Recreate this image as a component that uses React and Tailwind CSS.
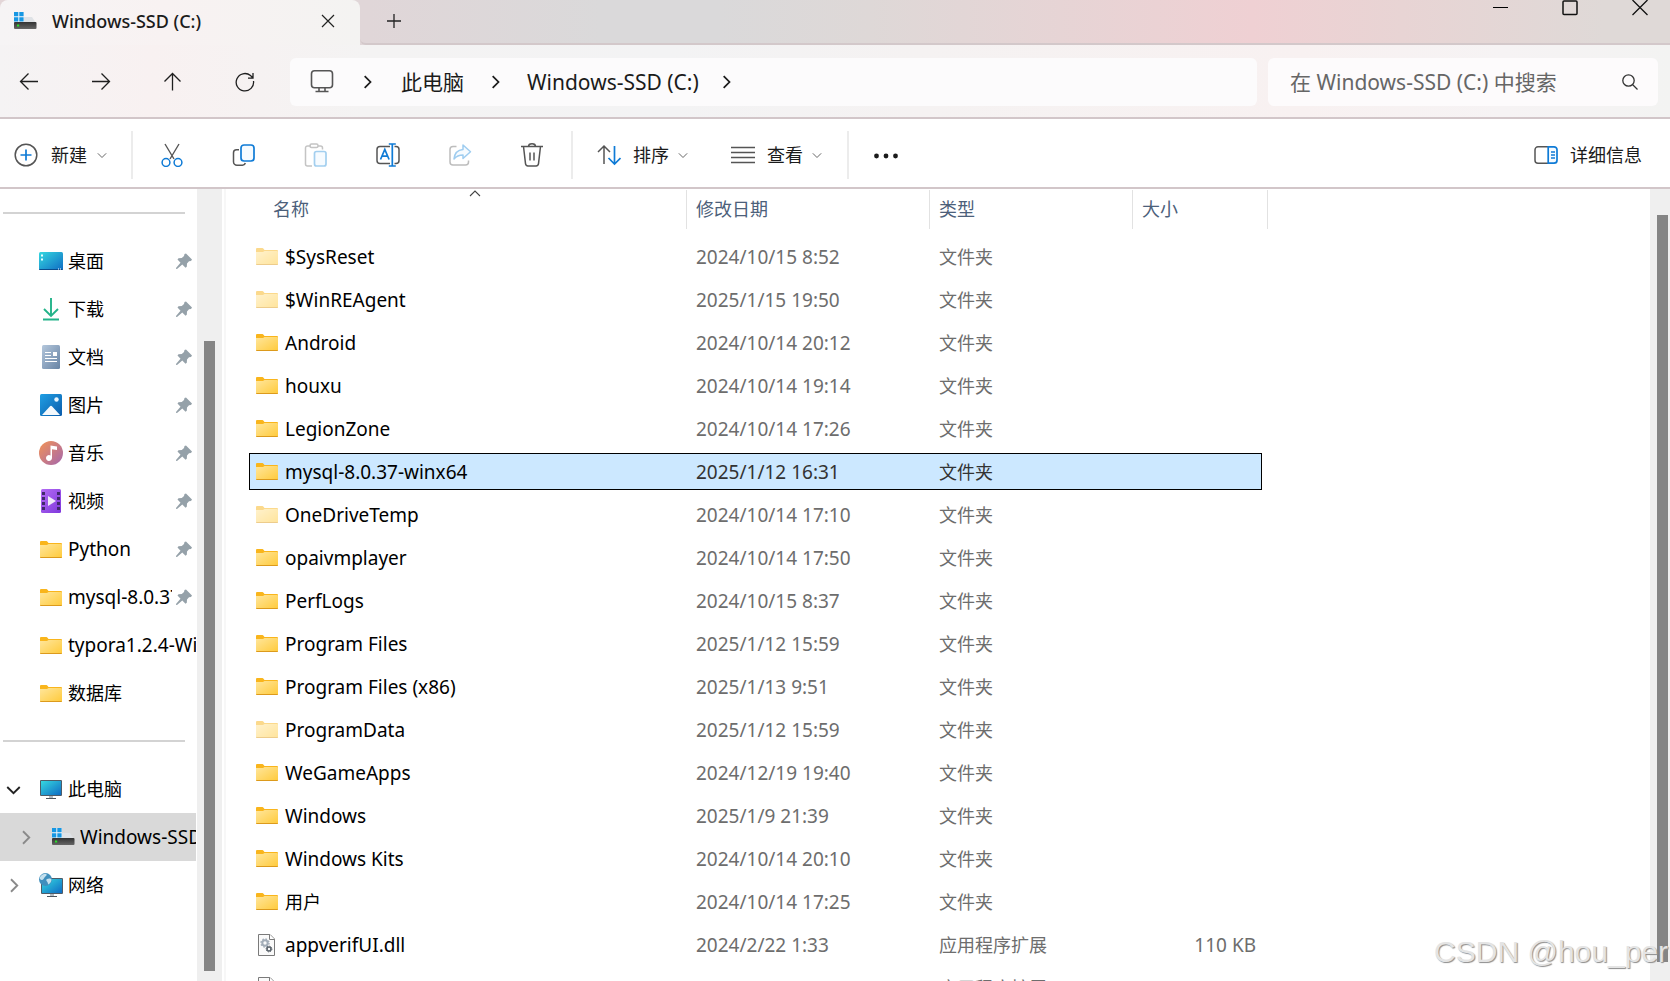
import React from "react";

const SANS = "font-['Noto_Sans','Noto_Sans_CJK_SC',sans-serif]";
const hasHan = (s) => /[\u4e00-\u9fff]/.test(s);
const sizeOf = (s) => (hasHan(s) ? "text-[18px]" : "text-[19px]");

/* ---------- icons ---------- */

function FolderIcon({ faded }) {
  return (
    <svg width="22" height="17" viewBox="0 0 22 17" className={faded ? "shrink-0 opacity-50" : "shrink-0"} aria-hidden="true">
      <defs>
        <linearGradient id="folderFill" x1="0" y1="0" x2="1" y2="1">
          <stop offset="0" stopColor="#ffe69c" />
          <stop offset="1" stopColor="#ffca3a" />
        </linearGradient>
      </defs>
      <path d="M0 1a1 1 0 0 1 1-1h5.500a1 1 0 0 1 .8.400L8.500 2H21a1 1 0 0 1 1 1v3H0z" fill="#f9b51c" />
      <path d="M0 4h7l1.500-1H21a1 1 0 0 1 1 1v12a1 1 0 0 1-1 1H1a1 1 0 0 1-1-1z" fill="url(#folderFill)" />
      <path d="M0 15.500v.5a1 1 0 0 0 1 1h20a1 1 0 0 0 1-1v-.5a.5.5 0 0 1-.5.500h-21a.5.5 0 0 1-.5-.5z" fill="#dc9a1c" />
    </svg>
  );
}

function DllIcon() {
  return (
    <svg width="22" height="22" viewBox="0 0 22 22" className="shrink-0" aria-hidden="true">
      <path d="M2.500.500h11.500l4.500 4.500v16.500h-16z" fill="#fafafa" stroke="#7a7a7a" />
      <path d="M13.500.500v5h5" fill="#fff" stroke="#7a7a7a" />
      <circle cx="9" cy="9" r="2.700" fill="none" stroke="#a3adb8" strokeWidth="2" />
      <circle cx="9" cy="9" r="4" fill="none" stroke="#a3adb8" strokeWidth="1.400" strokeDasharray="1.600 1.540" />
      <circle cx="13" cy="15" r="2" fill="none" stroke="#5c646c" strokeWidth="1.600" />
      <circle cx="13" cy="15" r="2.900" fill="none" stroke="#5c646c" strokeWidth="1" strokeDasharray="1.200 1.080" />
    </svg>
  );
}

function DriveIcon() {
  return (
    <svg width="23" height="18" viewBox="0 0 23 18" className="shrink-0" aria-hidden="true">
      <defs>
        <linearGradient id="driveBody" x1="0" y1="0" x2="0" y2="1">
          <stop offset="0" stopColor="#333" />
          <stop offset="1" stopColor="#666" />
        </linearGradient>
      </defs>
      <path d="M3 5h15l4 6H0z" fill="#dfe2e6" />
      <rect x="0" y="0" width="10" height="10" fill="#f4f6f8" />
      <path d="M0 0h4.300v4.300H0zM5.300 0h4.300v4.300H5.300zM0 5.300h4.300v4.300H0zM5.300 5.300h4.300v4.300H5.300z" fill="#1797e3" />
      <rect x="0" y="10" width="22.500" height="7" rx="1" fill="url(#driveBody)" />
      <rect x="3" y="12.500" width="2.200" height="2" fill="#2be02b" />
    </svg>
  );
}

function DesktopIcon() {
  return (
    <svg width="24" height="18" viewBox="0 0 24 18" aria-hidden="true">
      <defs>
        <linearGradient id="screenFill" x1="0" y1="0" x2="1" y2="1">
          <stop offset="0" stopColor="#35d8e0" />
          <stop offset="1" stopColor="#0f6cc4" />
        </linearGradient>
      </defs>
      <rect width="24" height="18" rx="1.500" fill="url(#screenFill)" />
      <path d="M0 17h24v0a1 1 0 0 1-1 1H1a1 1 0 0 1-1-1z" fill="#0b4c8c" />
      <path d="M2 2.500h2v2H2zM2 6.500h2v2H2z" fill="#eaffff" />
      <path d="M19 16.500h1v1h-1zM21 16.500h1v1h-1z" fill="#fff" />
    </svg>
  );
}

function DownloadIcon() {
  return (
    <svg width="18" height="24" viewBox="0 0 18 24" fill="none" stroke="#23b389" strokeWidth="1.900" aria-hidden="true">
      <path d="M9 1v17M2 12l7 7 7-7M1 22.500h16" />
    </svg>
  );
}

function DocumentIcon() {
  return (
    <svg width="18" height="24" viewBox="0 0 18 24" aria-hidden="true">
      <defs>
        <linearGradient id="docFill" x1="0" y1="0" x2="1" y2="1">
          <stop offset="0" stopColor="#b4c7dc" />
          <stop offset="1" stopColor="#6783a4" />
        </linearGradient>
      </defs>
      <rect width="18" height="24" rx="1.500" fill="url(#docFill)" />
      <path d="M3 7.500h6M3 10.500h6M3 13.500h12M3 16.500h12" stroke="#fff" strokeWidth="1" />
      <path d="M11 7h4v4h-4z" fill="#fff" />
    </svg>
  );
}

function PictureIcon() {
  return (
    <svg width="22" height="22" viewBox="0 0 22 22" aria-hidden="true">
      <defs>
        <linearGradient id="picFill" x1="0" y1="0" x2="1" y2="1">
          <stop offset="0" stopColor="#209fe4" />
          <stop offset="1" stopColor="#0b5cab" />
        </linearGradient>
      </defs>
      <rect width="22" height="22" rx="1.500" fill="url(#picFill)" />
      <path d="M2 21 9.800 12.500a1.600 1.600 0 0 1 2.400 0L20 21z" fill="#f3f8fc" />
      <circle cx="16.500" cy="5.500" r="2.200" fill="#e8f6ff" />
    </svg>
  );
}

function MusicIcon() {
  return (
    <svg width="24" height="24" viewBox="0 0 24 24" aria-hidden="true">
      <defs>
        <linearGradient id="musicFill" x1="0" y1="0" x2="1" y2="1">
          <stop offset="0" stopColor="#f39355" />
          <stop offset="1" stopColor="#a466ae" />
        </linearGradient>
      </defs>
      <circle cx="12" cy="12" r="12" fill="url(#musicFill)" />
      <path d="M11.500 4.500 18 5.500V9l-5-.8v8.800a3 3 0 1 1-1.500-2.600z" fill="#fff" />
    </svg>
  );
}

function VideoIcon() {
  return (
    <svg width="20" height="24" viewBox="0 0 20 24" aria-hidden="true">
      <defs>
        <linearGradient id="videoFill" x1="0" y1="0" x2="1" y2="1">
          <stop offset="0" stopColor="#b46cf4" />
          <stop offset="1" stopColor="#7f38dc" />
        </linearGradient>
      </defs>
      <rect width="20" height="24" rx="1.500" fill="url(#videoFill)" />
      <path d="M1 3h3v3H1zM1 8h3v3H1zM1 13h3v3H1zM1 18h3v3H1zM16 3h3v3h-3zM16 8h3v3h-3zM16 13h3v3h-3zM16 18h3v3h-3z" fill="#41296c" />
      <path d="M7 7v10l8-5z" fill="#f0ebf8" />
    </svg>
  );
}

function ComputerIcon() {
  return (
    <svg width="22" height="19" viewBox="0 0 22 19" aria-hidden="true">
      <rect width="22" height="16" rx="1" fill="#4e5c68" />
      <rect x="1" y="1" width="20" height="14" fill="url(#screenFill)" />
      <path d="M9 16h4v2H9z" fill="#b3bac0" />
      <path d="M6 18h10v1H6z" fill="#4c545c" />
    </svg>
  );
}

function NetworkIcon() {
  return (
    <svg width="24" height="24" viewBox="0 0 24 24" aria-hidden="true">
      <rect x="2" y="5" width="22" height="16" rx="1" fill="#4e5c68" />
      <rect x="3" y="6" width="20" height="14" fill="url(#screenFill)" />
      <path d="M11 21h4v2h-4z" fill="#b3bac0" />
      <path d="M8 23h10v1H8z" fill="#4c545c" />
      <circle cx="6.500" cy="6.500" r="6.500" fill="#3f8fbd" />
      <path d="M1 4c2-3 5-3.500 6.500-3 .5 2-1 2-2 3.500S4 7.500 2.500 7 .500 5.500 1 4zM8 6c2-1 4-.5 4.500.5 0 2-1.500 4-3 5-1-1-.5-2-1.500-3S7 6.500 8 6z" fill="#c4e0ee" />
    </svg>
  );
}

function PinIcon() {
  return (
    <svg width="16" height="16" viewBox="0 0 16 16" aria-hidden="true">
      <path d="M10 .500 16 6.500 15 8l-2 .3-2 2.200-.2 3.300-1.300 1L6.300 11.500 1 16 0 15.800V15l4.500-5.300L1.500 6.500l1-1.200 3.300-.3L8 3l.5-2z" fill="#95a1a9" />
    </svg>
  );
}

function Chevron({ dir = "right", className = "", size = 12, stroke = 1.5 }) {
  const paths = {
    right: "M4 1l5 5-5 5",
    down: "M1 4l5 5 5-5",
    up: "M1 7l5-5 5 5",
  };
  return (
    <svg width={size} height={size} viewBox="0 0 12 12" fill="none" stroke="currentColor" strokeWidth={stroke} className={className} aria-hidden="true">
      <path d={paths[dir]} />
    </svg>
  );
}

function Line({ size = 24, children, ...rest }) {
  return (
    <svg width={size} height={size} viewBox={`0 0 ${size} ${size}`} fill="none" stroke="#555" strokeWidth="1.500" className="shrink-0" aria-hidden="true" {...rest}>
      {children}
    </svg>
  );
}

const BLUE = "#0f7bd6";

const CutIcon = () => (
  <Line>
    <path d="M5 1l9 15M19 1l-9 15" strokeWidth="1.400" />
    <circle cx="6" cy="19.500" r="3.900" stroke={BLUE} />
    <circle cx="18" cy="19.500" r="3.900" stroke={BLUE} />
  </Line>
);
const CopyIcon = () => (
  <Line>
    <path d="M7 6.800H4.500A3 3 0 0 0 1.500 9.800v9a3.500 3.500 0 0 0 3.500 3.500h5.500a3 3 0 0 0 2.800-2.300" />
    <rect x="9" y="2" width="13" height="16" rx="3" stroke={BLUE} strokeWidth="1.700" fill="#f6fbff" />
  </Line>
);
const PasteIcon = () => (
  <Line stroke="#c4c4c4">
    <path d="M7 3H3.500a2 2 0 0 0-2 2v16a2 2 0 0 0 2 2H8M14 3h2.500a2 2 0 0 1 2 2v1.500" />
    <rect x="6" y="1" width="8" height="3.500" rx="1.500" />
    <rect x="10.500" y="8.500" width="11.500" height="14.500" rx="2" stroke="#a3cfef" strokeWidth="1.700" fill="#f6fbff" />
  </Line>
);
const RenameIcon = () => (
  <Line>
    <path d="M14 3.500H4a3 3 0 0 0-3 3v11a3 3 0 0 0 3 3h10M18.500 3.500h1.500a3 3 0 0 1 3 3v11a3 3 0 0 1-3 3h-1.500" />
    <path d="M4.500 16.500 8.800 6.500l4.300 10M6 13.200h5.600" stroke={BLUE} strokeWidth="1.700" />
    <path d="M16.300 1v22M12.800 1h7M12.800 23h7" stroke={BLUE} strokeWidth="1.700" />
  </Line>
);
const ShareIcon = () => (
  <Line stroke="#bdbdbd">
    <path d="M8.500 3.500H5a3 3 0 0 0-3 3V19a3 3 0 0 0 3 3h12.500a3 3 0 0 0 3-3v-1.500" />
    <path d="M15 2l7.500 6.800L15 15.500V12c-4 0-6.500 1-9 4 .5-5.500 3.500-9 9-9.500z" stroke="#9fcdf0" strokeLinejoin="round" fill="#f6fbff" />
  </Line>
);
const TrashIcon = () => (
  <Line>
    <path d="M1 3.500h22M8.500 3.500a3.500 2.700 0 0 1 7 0M3.500 3.500l2 17.200a2.500 2.500 0 0 0 2.400 2.200h8.200a2.500 2.500 0 0 0 2.400-2.200l2-17.200M10 9.500v8M14 9.500v8" />
  </Line>
);
const SortIcon = () => (
  <Line>
    <path d="M7 21V3M1 9l6-6 6 6" />
    <path d="M17.500 3v18M11.500 15l6 6 6-6" stroke={BLUE} strokeWidth="1.700" />
  </Line>
);
const ViewIcon = () => (
  <Line>
    <path d="M0 4.500h24M0 9.500h24M0 14.500h24M0 19.500h24" />
  </Line>
);
const NewIcon = () => (
  <Line>
    <circle cx="12" cy="12" r="10.800" />
    <path d="M12 6.500v11M6.500 12h11" stroke={BLUE} strokeWidth="1.700" />
  </Line>
);
const DetailsIcon = () => (
  <Line>
    <path d="M14 3.800H4a3 3 0 0 0-3 3v10.400a3 3 0 0 0 3 3h10" />
    <path d="M14.200 3.800H20a3 3 0 0 1 3 3v10.400a3 3 0 0 1-3 3h-5.800z" stroke={BLUE} strokeWidth="1.700" fill="#f6fbff" />
    <path d="M17 9h4M17 12h4M17 15h4" stroke={BLUE} strokeWidth="1.300" />
  </Line>
);

/* ---------- data ---------- */

const quickItems = [
  { label: "桌面", icon: <DesktopIcon />, pinned: true },
  { label: "下载", icon: <DownloadIcon />, pinned: true },
  { label: "文档", icon: <DocumentIcon />, pinned: true },
  { label: "图片", icon: <PictureIcon />, pinned: true },
  { label: "音乐", icon: <MusicIcon />, pinned: true },
  { label: "视频", icon: <VideoIcon />, pinned: true },
  { label: "Python", icon: <FolderIcon />, pinned: true },
  { label: "mysql-8.0.37", icon: <FolderIcon />, pinned: true },
  { label: "typora1.2.4-Wi", icon: <FolderIcon /> },
  { label: "数据库", icon: <FolderIcon /> },
];

const DIR = "文件夹";
const files = [
  { name: "$SysReset", date: "2024/10/15 8:52", type: DIR, faded: true },
  { name: "$WinREAgent", date: "2025/1/15 19:50", type: DIR, faded: true },
  { name: "Android", date: "2024/10/14 20:12", type: DIR },
  { name: "houxu", date: "2024/10/14 19:14", type: DIR },
  { name: "LegionZone", date: "2024/10/14 17:26", type: DIR },
  { name: "mysql-8.0.37-winx64", date: "2025/1/12 16:31", type: DIR, selected: true },
  { name: "OneDriveTemp", date: "2024/10/14 17:10", type: DIR, faded: true },
  { name: "opaivmplayer", date: "2024/10/14 17:50", type: DIR },
  { name: "PerfLogs", date: "2024/10/15 8:37", type: DIR },
  { name: "Program Files", date: "2025/1/12 15:59", type: DIR },
  { name: "Program Files (x86)", date: "2025/1/13 9:51", type: DIR },
  { name: "ProgramData", date: "2025/1/12 15:59", type: DIR, faded: true },
  { name: "WeGameApps", date: "2024/12/19 19:40", type: DIR },
  { name: "Windows", date: "2025/1/9 21:39", type: DIR },
  { name: "Windows Kits", date: "2024/10/14 20:10", type: DIR },
  { name: "用户", date: "2024/10/14 17:25", type: DIR },
  { name: "appverifUI.dll", date: "2024/2/22 1:33", type: "应用程序扩展", size: "110 KB", file: true },
  { name: "", date: "", type: "应用程序扩展", size: "", file: true },
];

/* ---------- parts ---------- */

function TitleBar() {
  return (
    <header className="flex h-[45px] shrink-0 bg-[linear-gradient(90deg,#e3d6d8_0%,#e0d6d8_22%,#dad9da_36%,#dad9da_43%,#ded8d7_52%,#efd0d3_75%,#e8d4d4_84%,#dfd9d7_96%)]">
      <div className="flex h-full w-[360px] shrink-0 items-center rounded-t-lg bg-[linear-gradient(90deg,#f6f4f5,#f8f2f2_45%,#f4f3f2)] pb-1 pl-[14px] pr-[24px]">
        <DriveIcon />
        <span className="ml-[15px] flex-1 whitespace-nowrap text-[18px] leading-6 font-medium text-[#1b1b1b]">Windows-SSD (C:)</span>
        <button aria-label="关闭标签页" className="p-0">
          <Line size={16} stroke="#222" strokeWidth="1.200"><path d="M2 2l12 12M14 2L2 14" /></Line>
        </button>
      </div>
      <div className="flex flex-1 items-start justify-between rounded-bl-md border-b-2 border-[#d3c8ca] pl-[26px]">
        <button aria-label="新标签页" className="mt-[13px]">
          <Line size={16} stroke="#222" strokeWidth="1.300"><path d="M8 1v14M1 8h14" /></Line>
        </button>
        <div className="flex gap-[54px] pr-[22px]">
          <button aria-label="最小化"><Line size={16} stroke="#000" strokeWidth="1"><path d="M1 7.500h15" /></Line></button>
          <button aria-label="最大化"><Line size={16} stroke="#111" strokeWidth="1.500"><rect x="1" y="1" width="14" height="13.500" rx="1" /></Line></button>
          <button aria-label="关闭"><Line size={16} stroke="#111" strokeWidth="1.300"><path d="M.5 0l15 15M15.500 0l-15 15" /></Line></button>
        </div>
      </div>
    </header>
  );
}

function NavButton({ label, children }) {
  return (
    <button aria-label={label} className="flex h-12 w-12 items-center justify-center">
      <Line size={20} stroke="#1f1f1f" strokeWidth="1.300">{children}</Line>
    </button>
  );
}

function NavBar() {
  return (
    <div className="flex h-[74px] shrink-0 items-center border-b-2 border-[#d2c6c9] bg-[linear-gradient(90deg,#f5f3f4,#f8f1f1_9%,#f4f3f3_22%,#f3f3f4_40%,#f5f2f2_55%,#f8f1f1_78%,#f6f3f4_90%,#f3f3f2)] pt-[2px] pl-[5px] pr-3">
      <nav className="flex gap-6" aria-label="导航">
        <NavButton label="后退"><path d="M19 9.500H1.500M9.500 1.500l-8 8 8 8" /></NavButton>
        <NavButton label="前进"><path d="M1 9.500h17.500M10.500 1.500l8 8-8 8" /></NavButton>
        <NavButton label="向上"><path d="M9.500 18.500V1.500M1.500 9.500l8-8 8 8" /></NavButton>
        <NavButton label="刷新"><path d="M18.500 9a8.700 8.700 0 1 1-3-5.400L18 6M18 1v5.200h-5" /></NavButton>
      </nav>
      <div className="ml-[21px] flex h-12 flex-1 items-center rounded-md bg-[#fcfbfc] pl-5 text-[21px] leading-7 text-[#1b1b1b]">
        <svg width="24" height="24" viewBox="0 0 24 24" fill="none" stroke="#555" strokeWidth="1.600" aria-hidden="true">
          <rect x="1.500" y="0.800" width="21" height="17" rx="3" />
          <path d="M9 17.800v3.500M15 17.800v3.500M5.500 21.500h13" />
        </svg>
        <Chevron className="ml-[26px]" size={14} />
        <button className="ml-[27px]">此电脑</button>
        <Chevron className="ml-6" size={14} />
        <button className="ml-[25px] whitespace-nowrap">Windows-SSD (C:)</button>
        <Chevron className="ml-5" size={14} />
      </div>
      <label className="ml-[11px] flex h-12 w-[390px] items-center rounded-md bg-[#fdfbfc] pl-[22px] pr-5">
        <input
          type="text"
          aria-label="搜索"
          placeholder="在 Windows-SSD (C:) 中搜索"
          className="min-w-0 flex-1 bg-transparent text-[21px] leading-7 outline-none placeholder:text-[#666]"
        />
        <Line size={16} stroke="#333" strokeWidth="1.300"><circle cx="6.500" cy="6.500" r="5.700" /><path d="M10.500 10.500L15.500 15.500" /></Line>
      </label>
    </div>
  );
}

const Divider = () => <div className="h-12 w-[2px] bg-[#ececec]" />;

function IconButton({ label, children }) {
  return (
    <button aria-label={label} className="flex h-12 w-[72px] items-center justify-center">
      {children}
    </button>
  );
}

function Toolbar() {
  return (
    <div className="flex h-[70px] shrink-0 items-center border-b-2 border-[#d2c6c9] bg-white pt-1 pl-[14px] pr-7 text-[18px] leading-6 text-[#1b1b1b]">
      <button className="flex items-center whitespace-nowrap">
        <NewIcon />
        <span className="ml-[13px]">新建</span>
        <Chevron dir="down" size={10} stroke={1.2} className="ml-[10px] text-[#666]" />
      </button>
      <div className="ml-6"><Divider /></div>
      <div className="mx-[3px] flex">
        <IconButton label="剪切"><CutIcon /></IconButton>
        <IconButton label="复制"><CopyIcon /></IconButton>
        <IconButton label="粘贴"><PasteIcon /></IconButton>
        <IconButton label="重命名"><RenameIcon /></IconButton>
        <IconButton label="共享"><ShareIcon /></IconButton>
        <IconButton label="删除"><TrashIcon /></IconButton>
      </div>
      <Divider />
      <button className="ml-6 flex items-center whitespace-nowrap">
        <SortIcon />
        <span className="ml-3">排序</span>
        <Chevron dir="down" size={10} stroke={1.2} className="ml-[9px] text-[#666]" />
      </button>
      <button className="ml-[43px] flex items-center whitespace-nowrap">
        <ViewIcon />
        <span className="ml-3">查看</span>
        <Chevron dir="down" size={10} stroke={1.2} className="ml-[9px] text-[#666]" />
      </button>
      <div className="mx-[25px]"><Divider /></div>
      <button aria-label="更多">
        <Line fill="#1b1b1b" stroke="none">
          <circle cx="2.500" cy="13" r="2.400" /><circle cx="12" cy="13" r="2.400" /><circle cx="21.500" cy="13" r="2.400" />
        </Line>
      </button>
      <button className="ml-auto flex items-center gap-3 whitespace-nowrap">
        <DetailsIcon />
        <span>详细信息</span>
      </button>
    </div>
  );
}

function SideItem({ item }) {
  return (
    <li>
      <button className="flex h-12 w-full items-center pl-[39px] pr-1 text-left">
        <span className="flex w-6 shrink-0 justify-center">{item.icon}</span>
        <span className={`ml-[5px] min-w-0 flex-1 overflow-hidden whitespace-nowrap leading-7 ${item.pinned ? "mr-1" : "-mr-1"} ${sizeOf(item.label)}`}>
          {item.label}
        </span>
        {item.pinned && <PinIcon />}
      </button>
    </li>
  );
}

function TreeItem({ label, icon, open, nested, selected }) {
  return (
    <li className={selected ? "bg-[#d9d9d9]" : ""}>
      <button className={`flex h-12 w-full items-center text-left ${nested ? "pl-[18px]" : "pl-[6px]"}`}>
        <Chevron dir={open ? "down" : "right"} size={15} className={`shrink-0 ${open ? "text-[#222]" : "text-[#8a8a8a]"}`} />
        <span className="ml-[18px] flex w-6 shrink-0 justify-center">{icon}</span>
        <span className={`ml-[5px] min-w-0 flex-1 overflow-hidden whitespace-nowrap leading-7 ${sizeOf(label)}`}>{label}</span>
      </button>
    </li>
  );
}

function Sidebar() {
  return (
    <aside className="w-[196px] shrink-0 overflow-hidden pt-[23px] text-black">
      <div className="ml-[3px] mr-[11px] h-[2px] bg-[#d3d3d3]" />
      <ul className="mt-[23px]">
        {quickItems.map((it) => <SideItem key={it.label} item={it} />)}
      </ul>
      <div className="mt-[23px] ml-[3px] mr-[11px] h-[2px] bg-[#d3d3d3]" />
      <ul className="mt-[23px]">
        <TreeItem label="此电脑" icon={<ComputerIcon />} open />
        <TreeItem label="Windows-SSD" icon={<DriveIcon />} nested selected />
        <TreeItem label="网络" icon={<NetworkIcon />} />
      </ul>
    </aside>
  );
}

const cellBase = "h-[37px] p-0 align-middle whitespace-nowrap leading-7";

function FileRow({ f }) {
  const edge = f.selected ? "border-y border-black bg-[#cce8ff]" : "";
  const tone = f.selected ? "text-[#333]" : "text-[#6d6d6d]";
  return (
    <tr>
      <td className={`${cellBase} ${edge} ${f.selected ? "border-l" : ""} text-black ${sizeOf(f.name)}`}>
        <div className={`flex items-center gap-[7px] ${f.selected ? "pl-[6px]" : "pl-[7px]"}`}>
          {f.file ? <DllIcon /> : <FolderIcon faded={f.faded} />}
          <span>{f.name}</span>
        </div>
      </td>
      <td className={`${cellBase} ${edge} ${tone} pl-[9px] text-[19px]`}>{f.date}</td>
      <td className={`${cellBase} ${edge} ${tone} pl-[9px] text-[18px]`}>{f.type}</td>
      <td className={`${cellBase} ${edge} ${f.selected ? "border-r" : ""} ${tone} pr-[6px] text-right text-[19px]`}>{f.size}</td>
      <td className="p-0" />
    </tr>
  );
}

function HeadCell({ children, first, last }) {
  return (
    <th scope="col" className="h-[42px] p-0 align-top font-normal">
      <button className={`flex h-[39px] w-full items-center border-[#e2e2e2] pb-[2px] text-left ${last ? "" : "border-r"} ${first ? "pl-6" : "pl-[9px]"}`}>
        {children}
      </button>
    </th>
  );
}

function FileList() {
  return (
    <main className="relative min-w-0 flex-1 overflow-hidden pl-[23px] pt-[1px]">
      <table className="-mt-[6px] w-[1019px] table-fixed border-separate border-spacing-x-0 border-spacing-y-[6px]">
        <colgroup>
          <col className="w-[438px]" />
          <col className="w-[243px]" />
          <col className="w-[203px]" />
          <col className="w-[129px]" />
          <col className="w-[6px]" />
        </colgroup>
        <thead className="text-[18px] leading-6 text-[#4c607a]">
          <tr>
            <HeadCell first>名称</HeadCell>
            <HeadCell>修改日期</HeadCell>
            <HeadCell>类型</HeadCell>
            <HeadCell last>大小</HeadCell>
            <td className="p-0 align-top"><div className="h-[39px] border-r border-[#e2e2e2]" /></td>
          </tr>
        </thead>
        <tbody>
          {files.map((f, i) => <FileRow key={i} f={f} />)}
        </tbody>
      </table>
      <Chevron dir="up" size={12} stroke={1.1} className="absolute left-[243px] top-0 text-[#444]" />
    </main>
  );
}

export default function App() {
  return (
    <div className={`relative flex h-screen flex-col overflow-hidden bg-white ${SANS}`}>
      <TitleBar />
      <NavBar />
      <Toolbar />
      <div className="flex min-h-0 flex-1">
        <Sidebar />
        <div className="ml-[1px] flex w-[25px] shrink-0 justify-center bg-[#efefef] pt-[152px] pb-[10px]">
          <div className="w-[11px] bg-[#858585]" />
        </div>
        <div className="ml-[2px] w-[2px] shrink-0 bg-[#f7f7f7]" />
        <FileList />
        <div className="flex w-5 shrink-0 justify-end bg-[#efefef] pr-[2px] pt-[26px] pb-[19px]">
          <div className="w-[11px] bg-[#858585]" />
        </div>
      </div>
      <div className="pointer-events-none absolute right-[2px] bottom-[11px] font-['Liberation_Sans',sans-serif] text-[30px] leading-9 text-[#e4e4e4] [text-shadow:1px_1px_1px_#8c8c8c]">
        CSDN @hou_per
      </div>
    </div>
  );
}
